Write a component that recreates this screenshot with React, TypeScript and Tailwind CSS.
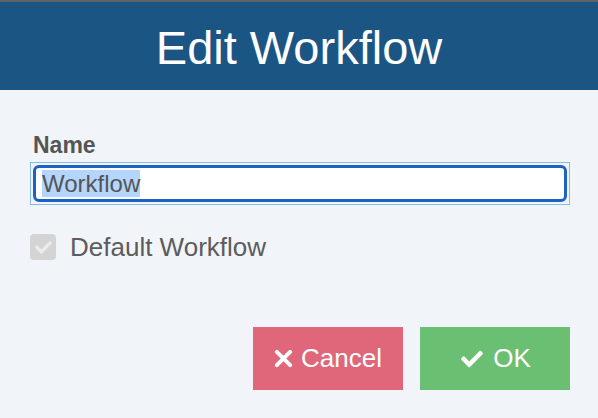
import React from 'react';
import { FaCheck } from 'react-icons/fa';

const font = { fontFamily: '"Liberation Sans", Arial, sans-serif' };

const Cross = ({ className = '' }: { className?: string }) => (
  <svg viewBox="0 0 20 20" className={className} fill="none" stroke="currentColor" strokeWidth={4.2} strokeLinecap="round">
    <path d="M3 3 L17 17 M17 3 L3 17" />
  </svg>
);

export default function App() {
  return (
    <div className="w-[598px] h-[418px] flex flex-col bg-[#f1f4f8] overflow-hidden" style={font}>
      <div className="h-[2px] bg-[#5f6266]" />
      <header className="h-[88px] bg-[#1b5584] flex items-center justify-center pt-[3px]">
        <h1 className="text-[47px] text-white leading-none">Edit Workflow</h1>
      </header>
      <main className="flex-1 flex flex-col pl-[30px] pr-[28px] pt-[42px]">
        <label className="text-[23px] font-bold text-[#555] leading-[26px] pl-[3px]">Name</label>
        <div className="mt-[4px] border border-[#8bbbe3] p-[2px]">
          <div className="h-[37px] border-[3px] border-[#1c62c4] rounded-[6px] bg-white flex items-center pl-[6px]">
            <span className="text-[24px] text-[#555] bg-[#b4d5fe] leading-[27px]">Workflow</span>
          </div>
        </div>
        <div className="mt-[29px] flex items-center gap-[14px]">
          <div className="w-[26px] h-[26px] rounded-[4px] bg-[#d4d4d4] flex items-center justify-center">
            <FaCheck className="text-[#ececec] w-[17px] h-[17px]" />
          </div>
          <span className="text-[26px] text-[#5c5c5c] leading-none">Default Workflow</span>
        </div>
        <div className="mt-[67px] flex justify-end gap-[17px]">
          <button className="w-[150px] h-[63px] bg-[#e0677a] text-white flex items-center justify-center gap-[8px] text-[26px]">
            <Cross className="w-[19px] h-[19px]" />
            Cancel
          </button>
          <button className="w-[150px] h-[63px] bg-[#6bbf73] text-white flex items-center justify-center gap-[8px] text-[26px]">
            <FaCheck className="w-[26px] h-[22px]" />
            OK
          </button>
        </div>
      </main>
    </div>
  );
}
